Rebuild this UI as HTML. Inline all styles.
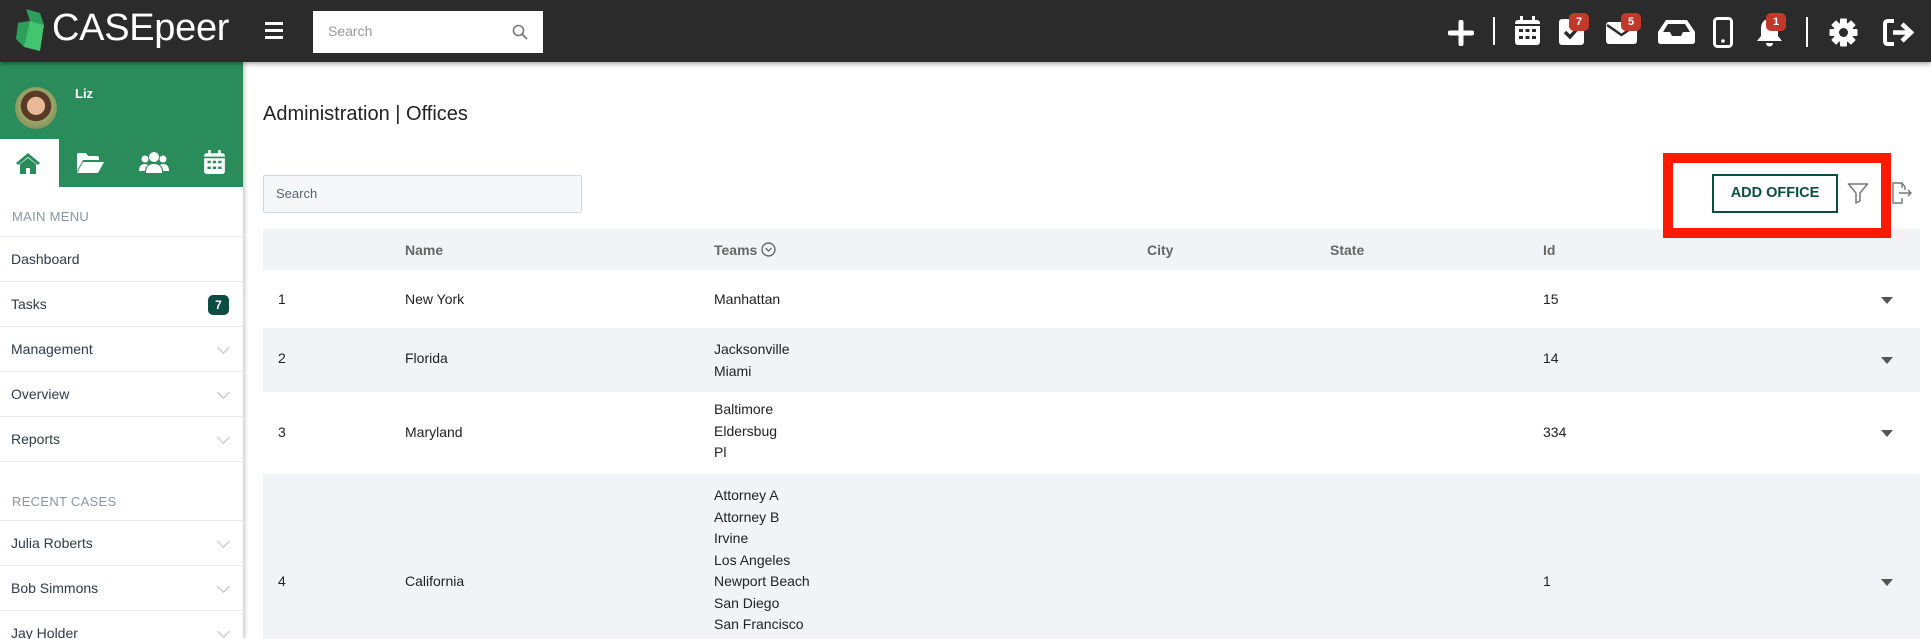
<!DOCTYPE html>
<html><head><meta charset="utf-8"><style>
*{box-sizing:border-box;margin:0;padding:0}
html,body{width:1931px;height:639px;overflow:hidden}
body{background:#fff;font-family:"Liberation Sans",sans-serif;position:relative;color:#222}
.a{position:absolute}
#top{left:0;top:0;width:1931px;height:62px;background:#2b2b2b;box-shadow:0 2px 4px rgba(0,0,0,.35);z-index:5}
.badge{position:absolute;background:#c0392b;color:#fff;font-size:11px;font-weight:bold;border-radius:5px;width:20px;height:18px;text-align:center;line-height:18px}
#side{left:0;top:62px;width:243px;height:577px;background:#fff;box-shadow:2px 0 4px rgba(0,0,0,.2);z-index:2}
.mi{position:absolute;left:0;width:243px;height:45px;border-top:1px solid #e6e8ee;font-size:14px;color:#2f3a4a;padding-left:11px;line-height:45px}
.mh{position:absolute;left:12px;font-size:13px;color:#8a93a8;letter-spacing:.3px}
.chev{position:absolute;right:15px;top:16px;width:9px;height:9px;border-right:1.5px solid #b8bcc8;border-bottom:1.5px solid #b8bcc8;transform:rotate(45deg)}
.row{position:absolute;left:263px;width:1657px}
.t{position:absolute;font-size:14px;color:#222}
.th{position:absolute;font-size:14px;color:#666;font-weight:bold;top:242px}
.caret{position:absolute;left:1881px;width:0;height:0;border-left:6px solid transparent;border-right:6px solid transparent;border-top:7px solid #555}
</style></head><body>
<div id="top" class="a">
  <svg class="a" style="left:16px;top:9px" width="30" height="42" viewBox="0 0 30 42"><path d="M10 0 L24 4 L28 16 L14 12 Z" fill="#2e9e5b"/><path d="M2 14 L14 12 L28 16 L24 42 L8 38 Z" fill="#43c46f"/><path d="M2 14 L14 12 L8 38 L0 30Z" fill="#2e9e5b"/></svg>
  <div class="a" style="left:52px;top:7px;color:#fff;font-size:38px;letter-spacing:-.3px">CASEpeer</div>
  <div class="a" style="left:265px;top:22px;width:18px;height:3px;background:#fff;box-shadow:0 7px 0 #fff,0 14px 0 #fff"></div>
  <div class="a" style="left:313px;top:11px;width:230px;height:42px;background:#fff"><span class="a" style="left:15px;top:12px;font-size:14px;color:#999">Search</span>
    <svg class="a" style="left:199px;top:13px" width="16" height="16" viewBox="0 0 16 16"><circle cx="6.5" cy="6.5" r="5" fill="none" stroke="#777" stroke-width="1.6"/><path d="M10 10 L15 15" stroke="#777" stroke-width="1.8"/></svg></div>
  <svg class="a" style="left:1448px;top:20px" width="26" height="26"><path d="M13 2V24M2 13H24" stroke="#fff" stroke-width="5" stroke-linecap="round"/></svg>
  <div class="a" style="left:1493px;top:17px;width:2px;height:28px;background:#fff"></div>
  <svg class="a" style="left:1515px;top:16px" width="25" height="29" viewBox="0 0 25 29"><rect x="0" y="4" width="25" height="25" rx="3" fill="#fff"/><rect x="5" y="0" width="3" height="6" fill="#fff"/><rect x="17" y="0" width="3" height="6" fill="#fff"/><rect x="0" y="8" width="25" height="2" fill="#2b2b2b"/><g fill="#2b2b2b"><rect x="4" y="13" width="4" height="3"/><rect x="10.5" y="13" width="4" height="3"/><rect x="17" y="13" width="4" height="3"/><rect x="4" y="20" width="4" height="3"/><rect x="10.5" y="20" width="4" height="3"/><rect x="17" y="20" width="4" height="3"/></g></svg>
  <svg class="a" style="left:1559px;top:19px" width="25" height="26"><rect width="25" height="26" rx="3" fill="#fff"/><path d="M6 13 L11 18 L19 9" stroke="#2b2b2b" stroke-width="3.5" fill="none"/></svg>
  <div class="badge" style="left:1569px;top:13px">7</div>
  <svg class="a" style="left:1606px;top:22px" width="31" height="22"><rect width="31" height="22" rx="3" fill="#fff"/><path d="M1 3 L15.5 13 L30 3" stroke="#2b2b2b" stroke-width="2.5" fill="none"/></svg>
  <div class="badge" style="left:1621px;top:13px">5</div>
  <svg class="a" style="left:1658px;top:20px" width="37" height="24" viewBox="0 0 37 24"><path d="M8 0H29L37 12V21Q37 24 34 24H3Q0 24 0 21V12Z" fill="#fff"/><path d="M5 12H12L14 16H23L25 12H32L27 4H10Z" fill="#2b2b2b"/></svg>
  <svg class="a" style="left:1713px;top:17px" width="20" height="31"><rect x="1.5" y="1.5" width="17" height="28" rx="3" fill="none" stroke="#fff" stroke-width="3"/><circle cx="10" cy="24" r="1.8" fill="#fff"/></svg>
  <svg class="a" style="left:1756px;top:17px" width="27" height="31" viewBox="0 0 27 31"><path d="M13.5 2C7 2 5 7 5 12V19L1 24H26L22 19V12C22 7 20 2 13.5 2Z" fill="#fff"/><path d="M10 26A3.5 3.5 0 0 0 17 26Z" fill="#fff"/></svg>
  <div class="badge" style="left:1766px;top:13px">1</div>
  <div class="a" style="left:1806px;top:17px;width:2px;height:30px;background:#fff"></div>
  <svg class="a" style="left:1829px;top:18px" width="29" height="29" viewBox="0 0 29 29"><g fill="#fff" transform="translate(14.5 14.5)"><rect x="-3.5" y="-14" width="7" height="28" rx="1"/><rect x="-3.5" y="-14" width="7" height="28" rx="1" transform="rotate(45)"/><rect x="-3.5" y="-14" width="7" height="28" rx="1" transform="rotate(90)"/><rect x="-3.5" y="-14" width="7" height="28" rx="1" transform="rotate(135)"/><circle r="10"/></g><circle cx="14.5" cy="14.5" r="4.5" fill="#2b2b2b"/></svg>
  <svg class="a" style="left:1883px;top:19px" width="33" height="27" viewBox="0 0 33 27"><path d="M11 2H5Q2 2 2 5V22Q2 25 5 25H11" stroke="#fff" stroke-width="4" fill="none"/><path d="M10 13.5H27M19 5L28 13.5L19 22" stroke="#fff" stroke-width="4.5" fill="none"/></svg>
</div>
<div id="side" class="a">
  <div class="a" style="left:0;top:0;width:243px;height:125px;background:#2a8c5a"></div>
  <div class="a" style="left:15px;top:25px;width:42px;height:42px;border-radius:50%;background:radial-gradient(circle at 50% 45%,#e8b899 0 28%,#5a3a26 30% 48%,#9aa86a 50%,#6d7a4a 100%)"></div>
  <div class="a" style="left:75px;top:24px;color:#fff;font-size:13px;font-weight:bold">Liz</div>
  <div class="a" style="left:0;top:77px;width:59px;height:48px;background:#fff"></div>
  <svg class="a" style="left:15px;top:90px" width="26" height="22" viewBox="0 0 26 22"><path d="M13 1L1 11L3 13L13 5L23 13L25 11Z" fill="#2a8c5a"/><path d="M5 12V22H11V16H15V22H21V12L13 6Z" fill="#2a8c5a"/></svg>
  <svg class="a" style="left:77px;top:91px" width="27" height="20" viewBox="0 0 27 20"><path d="M0 2Q0 0 2 0H9L11 3H20Q22 3 22 5V7H6L0 18Z" fill="#fff"/><path d="M6 9H27L21 20H0Z" fill="#fff"/></svg>
  <svg class="a" style="left:139px;top:90px" width="30" height="21" viewBox="0 0 30 21"><g fill="#fff"><circle cx="15" cy="5" r="5"/><circle cx="6" cy="7" r="3.5"/><circle cx="24" cy="7" r="3.5"/><path d="M7 21Q7 12 15 12Q23 12 23 21Z"/><path d="M0 19Q0 12 6 12Q8 12 9 13Q6 15 6 19Z"/><path d="M30 19Q30 12 24 12Q22 12 21 13Q24 15 24 19Z"/></g></svg>
  <svg class="a" style="left:204px;top:88px" width="21" height="24" viewBox="0 0 25 29"><rect x="0" y="4" width="25" height="25" rx="3" fill="#fff"/><rect x="5" y="0" width="3" height="6" fill="#fff"/><rect x="17" y="0" width="3" height="6" fill="#fff"/><rect x="0" y="8" width="25" height="2" fill="#2a8c5a"/><g fill="#2a8c5a"><rect x="4" y="13" width="4" height="3"/><rect x="10.5" y="13" width="4" height="3"/><rect x="17" y="13" width="4" height="3"/><rect x="4" y="20" width="4" height="3"/><rect x="10.5" y="20" width="4" height="3"/><rect x="17" y="20" width="4" height="3"/></g></svg>
  <div class="mh" style="top:147px">MAIN MENU</div>
  <div class="mi" style="top:174px">Dashboard</div>
  <div class="mi" style="top:219px">Tasks<span class="a" style="left:208px;top:13px;width:21px;height:20px;border-radius:5px;background:#0b4d43;color:#fff;font-size:12px;font-weight:bold;line-height:20px;text-align:center">7</span></div>
  <div class="mi" style="top:264px">Management<i class="chev"></i></div>
  <div class="mi" style="top:309px">Overview<i class="chev"></i></div>
  <div class="mi" style="top:354px">Reports<i class="chev"></i></div>
  <div class="mi" style="top:399px;height:1px"></div>
  <div class="mh" style="top:432px">RECENT CASES</div>
  <div class="mi" style="top:458px">Julia Roberts<i class="chev"></i></div>
  <div class="mi" style="top:503px">Bob Simmons<i class="chev"></i></div>
  <div class="mi" style="top:548px">Jay Holder<i class="chev"></i></div>
</div>
<div class="a" style="left:263px;top:103px;font-size:20px;color:#222">Administration | Offices</div>
<div class="a" style="left:263px;top:175px;width:319px;height:38px;background:#f6f7f9;border:1.5px solid #d3d6de;border-radius:2px"><span class="a" style="left:12px;top:10px;font-size:13px;color:#5a6478">Search</span></div>

<div class="row" style="top:229px;height:41px;background:#f2f3f7"></div>
<div class="row" style="top:328px;height:64px;background:#f2f3f7"></div>
<div class="row" style="top:474px;height:165px;background:#f2f3f7"></div>
<div class="th" style="left:405px">Name</div>
<div class="th" style="left:714px">Teams <svg width="15" height="15" style="vertical-align:-2px"><circle cx="7.5" cy="7.5" r="6.5" fill="none" stroke="#555" stroke-width="1.2"/><path d="M4.5 6L7.5 9L10.5 6" fill="none" stroke="#555" stroke-width="1.2"/></svg></div>
<div class="th" style="left:1147px">City</div>
<div class="th" style="left:1330px">State</div>
<div class="th" style="left:1543px">Id</div>

<div class="t" style="left:278px;top:291px">1</div><div class="t" style="left:405px;top:291px">New York</div><div class="t" style="left:714px;top:291px">Manhattan</div><div class="t" style="left:1543px;top:291px">15</div><div class="caret" style="top:297px"></div>
<div class="t" style="left:278px;top:350px">2</div><div class="t" style="left:405px;top:350px">Florida</div><div class="t" style="left:714px;top:339px;line-height:21.5px">Jacksonville<br>Miami</div><div class="t" style="left:1543px;top:350px">14</div><div class="caret" style="top:357px"></div>
<div class="t" style="left:278px;top:424px">3</div><div class="t" style="left:405px;top:424px">Maryland</div><div class="t" style="left:714px;top:399px;line-height:21.5px">Baltimore<br>Eldersbug<br>Pl</div><div class="t" style="left:1543px;top:424px">334</div><div class="caret" style="top:430px"></div>
<div class="t" style="left:278px;top:573px">4</div><div class="t" style="left:405px;top:573px">California</div><div class="t" style="left:714px;top:485px;line-height:21.5px">Attorney A<br>Attorney B<br>Irvine<br>Los Angeles<br>Newport Beach<br>San Diego<br>San Francisco</div><div class="t" style="left:1543px;top:573px">1</div><div class="caret" style="top:579px"></div>

<div class="a" style="left:1663px;top:153px;width:228px;height:85px;border:10px solid #ff1a00;background:#fff"></div>
<div class="a" style="left:1712px;top:174px;width:126px;height:39px;border:2px solid #0b4d43;color:#0b4d43;font-weight:bold;font-size:14.5px;text-align:center;line-height:35px">ADD OFFICE</div>
<svg class="a" style="left:1847px;top:182px" width="22" height="22" viewBox="0 0 22 22"><path d="M1.5 2H20.5L13 11V19L9 21V11Z" fill="none" stroke="#777" stroke-width="1.5" stroke-linejoin="round"/></svg>
<svg class="a" style="left:1891px;top:181px" width="22" height="24" viewBox="0 0 22 24"><path d="M11 7V2H2V22H11V17" fill="none" stroke="#777" stroke-width="1.4"/><path d="M11 2L14 6V9" fill="none" stroke="#777" stroke-width="1.4"/><path d="M8 12H20M17 9L20 12L17 15" fill="none" stroke="#777" stroke-width="1.4"/></svg>
</body></html>
